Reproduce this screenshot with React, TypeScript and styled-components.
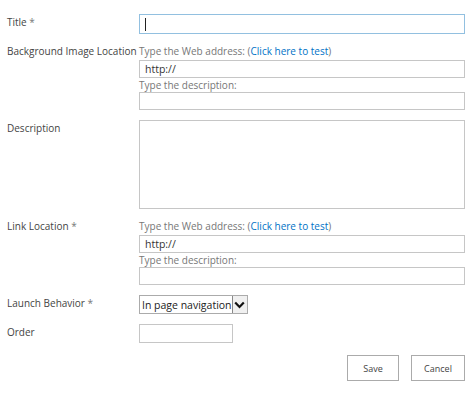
import React from "react";
import styled, { createGlobalStyle } from "styled-components";

const Global = createGlobalStyle`
  html, body { margin: 0; padding: 0; background: #fff; }
  body { font-family: "Open Sans", "Noto Sans", sans-serif; }
`;

const Page = styled.div`
  width: 474px;
  height: 398px;
  box-sizing: border-box;
  padding: 14px 9px 0 7px;
  font-size: 10px;
  color: #444;
`;

const Form = styled.div`
  display: grid;
  grid-template-columns: 132px 326px;
`;

const Label = styled.div`
  white-space: nowrap;
  line-height: 17px;
  color: #444;
`;

const Star = styled.span`
  color: #777;
`;

const Field = styled.div<{ $mb: number }>`
  display: flex;
  flex-direction: column;
  margin-bottom: ${(p) => p.$mb}px;
`;

const Hint = styled.div<{ $h: number }>`
  color: #777;
  height: ${(p) => p.$h}px;
  line-height: ${(p) => p.$h}px;
  white-space: nowrap;
`;

const Link = styled.a`
  color: #0072c6;
  text-decoration: none;
`;

const Input = styled.div<{ $w?: number; $h?: number; $focus?: boolean }>`
  box-sizing: border-box;
  width: ${(p) => (p.$w ? `${p.$w}px` : "100%")};
  height: ${(p) => p.$h ?? 18}px;
  border: 1px solid ${(p) => (p.$focus ? "#92c0e0" : "#c6c6c6")};
  background: #fff;
  padding: 0 5px;
  display: flex;
  align-items: center;
  color: #333;
  font-size: 10.5px;
`;

const Caret = styled.span`
  width: 1px;
  height: 13px;
  background: #222;
`;

const Select = styled.div`
  box-sizing: border-box;
  width: 109px;
  height: 19px;
  border: 1px solid #ababab;
  display: flex;
  align-items: stretch;
  background: #fff;
`;

const SelectText = styled.div`
  flex: 1;
  padding-left: 2px;
  display: flex;
  align-items: center;
  font-size: 10.5px;
  color: #222;
  white-space: nowrap;
`;

const SelectBtn = styled.div`
  width: 15px;
  border-left: 1px solid #888;
  background: #f0f0f0;
  display: flex;
  align-items: center;
  justify-content: center;
`;

const Buttons = styled.div`
  display: flex;
  justify-content: flex-end;
  gap: 12px;
  margin-top: 12px;
`;

const Button = styled.div<{ $w: number }>`
  box-sizing: border-box;
  width: ${(p) => p.$w}px;
  height: 26px;
  border: 1px solid #ababab;
  background: #fff;
  display: flex;
  align-items: center;
  justify-content: center;
  font-size: 9px;
  color: #444;
`;

export default function App() {
  return (
    <>
      <Global />
      <Page>
        <Form>
          <Label>
            Title <Star>*</Star>
          </Label>
          <Field $mb={9}>
            <Input $h={20} $focus>
              <Caret />
            </Input>
          </Field>

          <Label>Background Image Location</Label>
          <Field $mb={10}>
            <Hint $h={17}>
              Type the Web address: (<Link>Click here to test</Link>)
            </Hint>
            <Input>http://</Input>
            <Hint $h={14}>Type the description:</Hint>
            <Input />
          </Field>

          <Label>Description</Label>
          <Field $mb={9}>
            <Input $h={89} />
          </Field>

          <Label>
            Link Location <Star>*</Star>
          </Label>
          <Field $mb={10}>
            <Hint $h={17}>
              Type the Web address: (<Link>Click here to test</Link>)
            </Hint>
            <Input>http://</Input>
            <Hint $h={14}>Type the description:</Hint>
            <Input />
          </Field>

          <Label>
            Launch Behavior <Star>*</Star>
          </Label>
          <Field $mb={10}>
            <Select>
              <SelectText>In page navigation</SelectText>
              <SelectBtn>
                <svg width="11" height="8" viewBox="0 0 11 8">
                  <path d="M1.2 1.5 L5.5 6 L9.8 1.5" fill="none" stroke="#111" strokeWidth="2.2" />
                </svg>
              </SelectBtn>
            </Select>
          </Field>

          <Label>Order</Label>
          <Field $mb={0}>
            <Input $w={94} $h={19} />
          </Field>
        </Form>
        <Buttons>
          <Button $w={52}>Save</Button>
          <Button $w={54}>Cancel</Button>
        </Buttons>
      </Page>
    </>
  );
}
